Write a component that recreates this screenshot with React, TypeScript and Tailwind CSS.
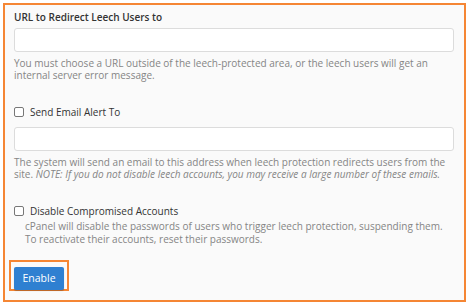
export default function App() {
  return (
    <div
      className="w-[474px] h-[306px] bg-white pt-[3px] pl-[3px]"
      style={{ fontFamily: '"Open Sans", "Liberation Sans", sans-serif' }}
    >
      <div className="w-[463px] h-[299px] border-2 border-[#f58634] bg-[#fafafa] pl-[9px] pr-[10px] pt-[5px]">
        <div className="text-[10px] font-semibold text-[#333] leading-[14px]">
          URL to Redirect Leech Users to
        </div>
        <div className="mt-[4px] h-[24px] w-[440px] rounded-[3px] border border-[#dcdcdc] bg-white" />
        <p className="mt-[5px] text-[10px] leading-[12px] text-[#858585]">
          You must choose a URL outside of the leech-protected area, or the leech users will get an internal server error message.
        </p>

        <label className="mt-[24px] flex items-center gap-[6px] text-[10px] text-[#333] leading-[14px]">
          <span className="w-[10px] h-[10px] rounded-[2px] border border-[#777] bg-white" />
          Send Email Alert To
        </label>
        <div className="mt-[8px] h-[24px] w-[440px] rounded-[3px] border border-[#dcdcdc] bg-white" />
        <p className="mt-[5px] text-[10px] leading-[12px] text-[#858585]">
          The system will send an email to this address when leech protection redirects users from the site.{" "}
          <i>NOTE: If you do not disable leech accounts, you may receive a large number of these emails.</i>
        </p>

        <label className="mt-[24px] flex items-center gap-[6px] text-[10px] text-[#333] leading-[14px]">
          <span className="w-[10px] h-[10px] rounded-[2px] border border-[#777] bg-white" />
          Disable Compromised Accounts
        </label>
        <p className="mt-[2px] pl-[11px] text-[10px] leading-[13px] text-[#858585]">
          cPanel will disable the passwords of users who trigger leech protection, suspending them. To reactivate their accounts, reset their passwords.
        </p>

        <div className="mt-[14px] -ml-[5px] w-[60px] h-[31px] border-2 border-[#f58634] pl-[3px] pt-[2px]">
          <button className="w-[50px] h-[23px] rounded-[2px] bg-[#2f80d1] text-white text-[10.5px] leading-[23px] shadow-[0_1px_1px_rgba(0,0,0,0.25)]">
            Enable
          </button>
        </div>
      </div>
    </div>
  );
}
